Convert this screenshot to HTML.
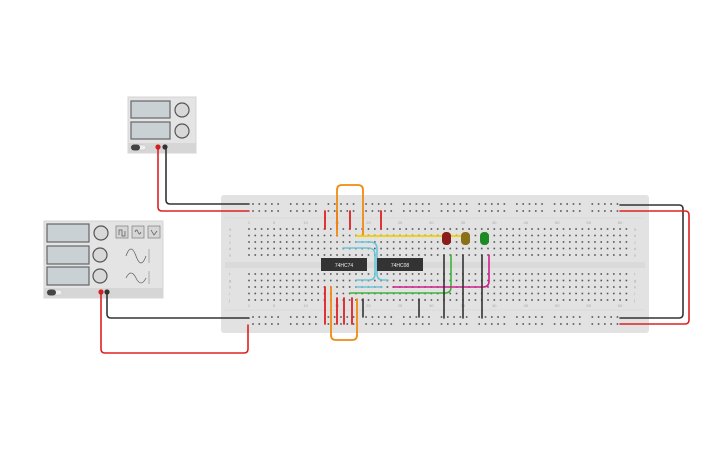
<!DOCTYPE html>
<html><head><meta charset="utf-8"><style>
html,body{margin:0;padding:0;background:#fff;width:725px;height:453px;overflow:hidden}
svg{display:block}
text{font-family:"Liberation Sans",sans-serif}
</style></head><body>
<svg id="s" width="725" height="453" viewBox="0 0 725 453" xmlns="http://www.w3.org/2000/svg">
<rect x="221" y="195" width="428" height="138" rx="3" fill="#e2e2e2"/>
<line x1="225" y1="218" x2="645" y2="218" stroke="#d3d3d3" stroke-width="0.6"/>
<line x1="225" y1="310" x2="645" y2="310" stroke="#d3d3d3" stroke-width="0.6"/>
<rect x="225" y="262" width="420" height="6" fill="#dadada"/>
<g id="dots" fill="#555"></g>
<g id="nums" font-size="4" fill="#aaa"></g>

<rect x="128" y="97" width="68" height="56" fill="#e4e4e4" stroke="#d4d4d4"/>
<rect x="131" y="101" width="39" height="17" fill="#c9d1d5" stroke="#666" stroke-width="1.2"/>
<rect x="131" y="122" width="39" height="17" fill="#c9d1d5" stroke="#666" stroke-width="1.2"/>
<circle cx="182" cy="110" r="7" fill="#d8d8d8" stroke="#555" stroke-width="1.2"/>
<circle cx="182" cy="131" r="7" fill="#d8d8d8" stroke="#555" stroke-width="1.2"/>
<rect x="128" y="143" width="68" height="10" fill="#d6d6d6"/>
<rect x="131" y="145" width="15" height="5" rx="2.5" fill="#eee" stroke="#bbb" stroke-width="0.5"/>
<rect x="131" y="144.5" width="9" height="6" rx="3" fill="#444"/>

<rect x="44" y="221" width="119" height="77" fill="#e4e4e4" stroke="#d4d4d4"/>
<rect x="47" y="224" width="42" height="18" fill="#c9d1d5" stroke="#666" stroke-width="1.2"/>
<rect x="47" y="246" width="42" height="18" fill="#c9d1d5" stroke="#666" stroke-width="1.2"/>
<rect x="47" y="267" width="42" height="18" fill="#c9d1d5" stroke="#666" stroke-width="1.2"/>
<circle cx="101" cy="233" r="7" fill="#d8d8d8" stroke="#555" stroke-width="1.2"/>
<circle cx="100" cy="255" r="7" fill="#d8d8d8" stroke="#555" stroke-width="1.2"/>
<circle cx="100" cy="276" r="7" fill="#d8d8d8" stroke="#555" stroke-width="1.2"/>
<rect x="116" y="226" width="12" height="12" fill="#d6d6d6" stroke="#888" stroke-width="0.8"/>
<rect x="132" y="226" width="12" height="12" fill="#d6d6d6" stroke="#888" stroke-width="0.8"/>
<rect x="148" y="226" width="12" height="12" fill="#d6d6d6" stroke="#888" stroke-width="0.8"/>
<path d="M119 235v-5h3v6h3v-5" fill="none" stroke="#555" stroke-width="0.7"/>
<path d="M135 232q1.5-4 3 0t3 0" fill="none" stroke="#555" stroke-width="0.7"/>
<path d="M151 230l3 5l3-4" fill="none" stroke="#555" stroke-width="0.7"/>
<path d="M126 256q5-14 10 0t10 0" fill="none" stroke="#666" stroke-width="0.8"/>
<line x1="149" y1="249" x2="149" y2="263" stroke="#888" stroke-width="0.6"/>
<path d="M126 278q5-10 10 0t10 0" fill="none" stroke="#666" stroke-width="0.8"/>
<line x1="149" y1="271" x2="149" y2="284" stroke="#888" stroke-width="0.6"/>
<rect x="44" y="288" width="119" height="10" fill="#d6d6d6"/>
<rect x="47" y="290" width="15" height="5" rx="2.5" fill="#eee" stroke="#bbb" stroke-width="0.5"/>
<rect x="47" y="289.5" width="9" height="6" rx="3" fill="#444"/>

<g fill="none" stroke-linecap="round" stroke-linejoin="round">
<path d="M166 147V200q0 4 4 4H249" stroke="#333" stroke-width="1.6"/>
<path d="M158 147V207q0 4 4 4H249" stroke="#e02020" stroke-width="1.6"/>
<path d="M620 205H679q4 0 4 4V314q0 4-4 4H620" stroke="#333" stroke-width="1.6"/>
<path d="M620 211H685q4 0 4 4V320q0 4-4 4H620" stroke="#e02020" stroke-width="1.6"/>
<path d="M107 292V314q0 4 4 4H249" stroke="#333" stroke-width="1.6"/>
<path d="M101 292V349q0 4 4 4H244q4 0 4-4V325" stroke="#e02020" stroke-width="1.6"/>
<path d="M325 211V229M337 211V229M350 211V229M381 211V229" stroke="#e02020" stroke-width="1.8"/>
<path d="M337 236V190q0-5 5-5H358q5 0 5 5V236" stroke="#f08a10" stroke-width="1.8"/>
<path d="M325 287V324M337 298V324M344 298V324M352 298V324" stroke="#e02020" stroke-width="1.8"/>
<path d="M331 287V335q0 5 5 5H352q5 0 5-5V299" stroke="#f08a10" stroke-width="1.8"/>
<path d="M363 299V317M419 299V317" stroke="#333" stroke-width="1.6"/>
<path d="M356 236H465" stroke="#f2d000" stroke-width="1.8"/>
<path d="M343 248H368q7 0 7 7V274q0 6-6 6H356" stroke="#6cc4d8" stroke-width="1.6"/>
<path d="M356 242H370q7 0 7 7V274q0 6 6 6H388" stroke="#6cc4d8" stroke-width="1.6"/>
<path d="M356 287H382" stroke="#6cc4d8" stroke-width="1.6"/>
<path d="M451 255V287q0 6-6 6H350" stroke="#3cb43c" stroke-width="1.6"/>
<path d="M489 255V281q0 6-6 6H393" stroke="#d0208c" stroke-width="1.6"/>
<path d="M444 255V318M463 255V318M482 255V318" stroke="#333" stroke-width="1.6"/>
</g>
<rect x="321" y="258" width="46" height="13" fill="#333"/>
<text x="344" y="267" font-size="5" fill="#eee" text-anchor="middle">74HC74</text>
<rect x="377" y="258" width="46" height="13" fill="#333"/>
<text x="400" y="267" font-size="5" fill="#eee" text-anchor="middle">74HC08</text>
<rect x="442" y="232" width="9" height="13" rx="4" fill="#8a1c1c"/>
<rect x="461" y="232" width="9" height="13" rx="4" fill="#8a7018"/>
<rect x="480" y="232" width="9" height="13" rx="4" fill="#1e8a24"/>
<circle cx="158" cy="147" r="2.6" fill="#d02020"/>
<circle cx="165" cy="147" r="2.6" fill="#333"/>
<circle cx="101" cy="292" r="2.6" fill="#d02020"/>
<circle cx="107" cy="292" r="2.6" fill="#333"/>
</svg>
<script>
var ns="http://www.w3.org/2000/svg",d=document.getElementById("dots"),n=document.getElementById("nums");
function dot(x,y){var r=document.createElementNS(ns,"rect");r.setAttribute("x",x-0.8);r.setAttribute("y",y-0.8);r.setAttribute("width",1.6);r.setAttribute("height",1.6);d.appendChild(r);}
var p=6.29;
var rows=[229,235.5,242,248.5,255,274,280.5,287,293.5,300];
for(var c=0;c<61;c++){var x=249+c*p;rows.forEach(function(y){dot(x,y)});}
for(var g=0;g<10;g++){for(var k=0;k<5;k++){var x=253+g*37.7+k*p;[204,211,317,324].forEach(function(y){dot(x,y)});}}
[1,5,10,15,20,25,30,35,40,45,50,55,60].forEach(function(v){var x=249+(v-1)*p;[224,307].forEach(function(y){var t=document.createElementNS(ns,"text");t.setAttribute("x",x);t.setAttribute("y",y);t.setAttribute("text-anchor","middle");t.textContent=v;n.appendChild(t);});});
"abcdefghij".split("").forEach(function(l,i){[229,634].forEach(function(x){var t=document.createElementNS(ns,"text");t.setAttribute("x",x);t.setAttribute("y",rows[i]+1.5);t.textContent=l;n.appendChild(t);});});
</script>
</body></html>
